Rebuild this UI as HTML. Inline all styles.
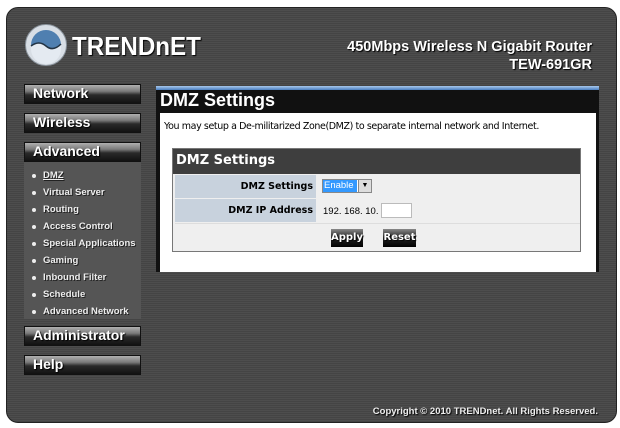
<!DOCTYPE html>
<html><head><style>
*{margin:0;padding:0;box-sizing:border-box}
body{width:620px;height:428px;background:#fff;position:relative;overflow:hidden;font-family:"Liberation Sans",sans-serif}
.panel{position:absolute;left:6px;top:7px;width:611px;height:416px;border-radius:12px;background:repeating-linear-gradient(#4d4d4d 0 1px,#444 1px 2px);border:1px solid #222}
.ab{position:absolute}
.btn{position:absolute;left:24px;width:117px;height:20px;border:1px solid #111;background:linear-gradient(#b0b0b0 0,#7a7a7a 35%,#2a2a2a 55%,#111 100%);color:#fff;font-weight:bold;font-size:14px;line-height:17px;padding-left:8px;text-shadow:1px 1px 1px #000}
.sub{position:absolute;left:24px;top:162px;width:117px;height:157px;background:#555}
.sub div{position:absolute;left:9px;color:#eee;font-weight:bold;font-size:9.5px;text-shadow:1px 1px 0 #222}
.sub div:before{content:"";position:absolute;left:-1px;top:4px;width:4px;height:4px;border-radius:50%;background:#eee}
.sub span{margin-left:10px}
.sh{text-shadow:1px 1px 1px #000}
</style></head><body>
<div class="panel"></div>
<svg class="ab" style="left:24px;top:23px" width="44" height="44" viewBox="0 0 44 44">
<circle cx="22" cy="22" r="20.5" fill="#d8dee5" stroke="#8a939c" stroke-width="1"/>
<circle cx="22" cy="22" r="15" fill="#4f7fb0"/>
<path d="M7 23 Q15 17 22 23 T37 21 L37 26 A15 15 0 0 1 7 26Z" fill="#e4eaf1"/>
<path d="M7 23 Q15 17 22 23 T37 21" stroke="#234" stroke-width="1.5" fill="none"/>
</svg>
<div class="ab sh" style="left:72px;top:31px;color:#fff;font-weight:bold;font-size:26px;transform:scaleX(0.93);transform-origin:left">TRENDnET</div>
<div class="ab sh" style="right:28px;top:38px;color:#fff;font-weight:bold;font-size:14.5px;text-align:right;line-height:18px">450Mbps Wireless N Gigabit Router<br>TEW-691GR</div>

<div class="btn" style="top:84px">Network</div>
<div class="btn" style="top:113px">Wireless</div>
<div class="btn" style="top:142px">Advanced</div>
<div class="sub">
<div style="top:8px"><span style="text-decoration:underline">DMZ</span></div>
<div style="top:25px"><span>Virtual Server</span></div>
<div style="top:42px"><span>Routing</span></div>
<div style="top:59px"><span>Access Control</span></div>
<div style="top:76px"><span>Special Applications</span></div>
<div style="top:93px"><span>Gaming</span></div>
<div style="top:110px"><span>Inbound Filter</span></div>
<div style="top:127px"><span>Schedule</span></div>
<div style="top:144px"><span>Advanced Network</span></div>
</div>
<div class="btn" style="top:326px">Administrator</div>
<div class="btn" style="top:355px">Help</div>

<div class="ab" style="left:156px;top:86px;width:443px;height:4px;background:linear-gradient(#a8c8ec,#4a7fc0)"></div>
<div class="ab" style="left:156px;top:90px;width:443px;height:182px;background:#111"></div>
<div class="ab" style="left:160px;top:90px;color:#fff;font-weight:bold;font-size:18px">DMZ Settings</div>
<div class="ab" style="left:160px;top:113px;width:436px;height:159px;background:#fff"></div>
<div class="ab" style="left:164px;top:121px;font-size:9.5px;color:#000;font-family:'DejaVu Sans',sans-serif;letter-spacing:-0.4px">You may setup a De-militarized Zone(DMZ) to separate internal network and Internet.</div>
<div class="ab" style="left:172px;top:148px;width:409px;height:104px;border:1px solid #777;background:#efefef"></div>
<div class="ab" style="left:173px;top:149px;width:407px;height:25px;background:#3e3e3e"></div>
<div class="ab" style="left:176px;top:153px;color:#fff;font-weight:bold;font-size:13px;font-family:'DejaVu Sans',sans-serif">DMZ Settings</div>
<div class="ab" style="left:175px;top:175px;width:141px;height:23px;background:#c8d2dd"></div>
<div class="ab" style="left:175px;top:199px;width:141px;height:23px;background:#c8d2dd"></div>
<div class="ab" style="left:175px;top:223px;width:405px;height:1px;background:#ddd"></div>
<div class="ab" style="left:175px;top:181px;width:138px;text-align:right;font-weight:bold;font-size:9.5px;font-family:'DejaVu Sans',sans-serif">DMZ Settings</div>
<div class="ab" style="left:175px;top:205px;width:138px;text-align:right;font-weight:bold;font-size:9.5px;font-family:'DejaVu Sans',sans-serif">DMZ IP Address</div>
<div class="ab" style="left:322px;top:179px;width:50px;height:14px;border:1px solid #888;background:#fff"></div>
<div class="ab" style="left:323px;top:180px;width:34px;height:12px;background:#3399ff;color:#fff;font-size:9.5px;line-height:12px;padding-left:1px">Enable</div>
<div class="ab" style="left:358px;top:180px;width:13px;height:12px;background:#ddd;border-left:1px solid #888;font-size:7px;text-align:center;line-height:12px">▼</div>
<div class="ab" style="left:323px;top:206px;font-size:9.5px">192. 168. 10.</div>
<div class="ab" style="left:381px;top:203px;width:31px;height:15px;border:1px solid #bbb;background:#fff"></div>
<div class="ab sh" style="left:331px;top:229px;width:32px;height:18px;background:linear-gradient(#888,#222 50%,#000);color:#fff;font-weight:bold;font-size:10px;text-align:center;line-height:18px;font-family:'DejaVu Sans',sans-serif">Apply</div>
<div class="ab sh" style="left:383px;top:229px;width:33px;height:18px;background:linear-gradient(#888,#222 50%,#000);color:#fff;font-weight:bold;font-size:10px;text-align:center;line-height:18px;font-family:'DejaVu Sans',sans-serif">Reset</div>
<div class="ab sh" style="right:22px;top:406px;color:#eee;font-weight:bold;font-size:9.5px">Copyright © 2010 TRENDnet. All Rights Reserved.</div>
</body></html>
